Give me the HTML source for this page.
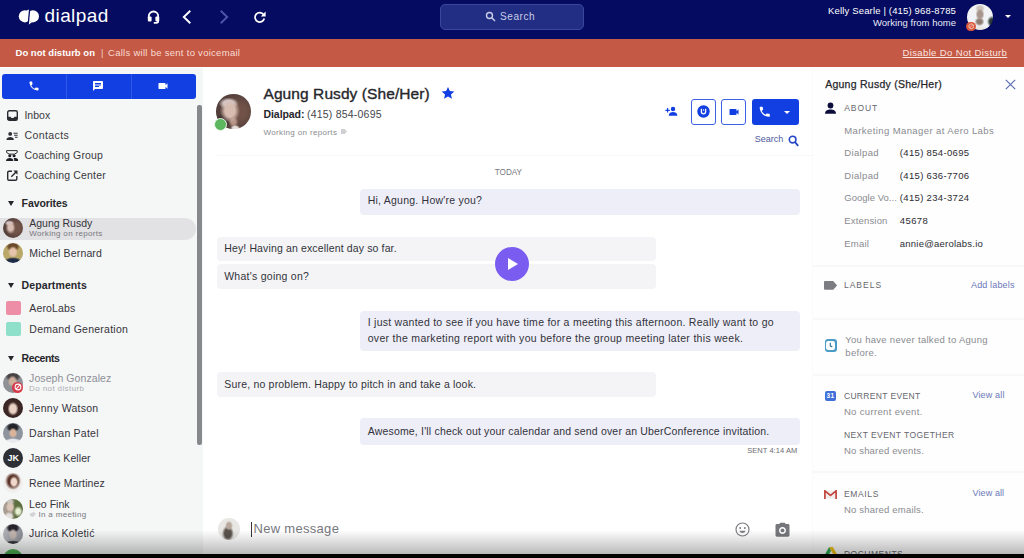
<!DOCTYPE html>
<html lang="en">
<head>
<meta charset="utf-8">
<title>Dialpad</title>
<style>
*{box-sizing:border-box;margin:0;padding:0}
html,body{width:1024px;height:558px;overflow:hidden;background:#fff;font-family:"Liberation Sans",sans-serif;color:#2a2a2e}
.abs{position:absolute}
.t{position:absolute;white-space:nowrap}
#app{position:relative;width:1024px;height:558px;overflow:hidden;background:#fff}
#top{position:absolute;left:0;top:0;width:1024px;height:39px;background:#040b60}
#searchbox{position:absolute;left:440px;top:4px;width:144px;height:26px;border-radius:5px;background:#222e84;border:1px solid #3a479c}
#dnd{position:absolute;left:0;top:38.700px;width:1024px;height:28.800px;background:#c45945}
#side{position:absolute;left:0;top:67.500px;width:203px;height:491px;background:#f5f6f6}
#tabs{position:absolute;left:2px;top:73.500px;width:194px;height:25.500px;background:#123fe2;border-radius:3px}
#tabs i{position:absolute;top:0;width:1px;height:25.500px;background:rgba(255,255,255,.13)}
#scroll{position:absolute;left:197.300px;top:105px;width:4.800px;height:340px;background:#87888c;border-radius:2px}
.tri{position:absolute;left:8px;width:0;height:0;border-left:3.5px solid transparent;border-right:3.5px solid transparent;border-top:5px solid #26262b}
.av{position:absolute;left:3px;width:20px;height:20px;border-radius:50%;overflow:hidden}
#main{position:absolute;left:203px;top:67.500px;width:609px;height:491px;background:#fff}
.bub{position:absolute;border-radius:4px}
.me{left:360px;width:440px;background:#eeeef8}
.you{left:217px;width:439px;background:#f4f4f6}
#right{position:absolute;left:812px;top:67.500px;width:212px;height:491px;background:#fefefe;border-left:1px solid #fafafb}
.sep{position:absolute;left:813px;width:211px;height:2px;background:#f8f8f9}
#fade{position:absolute;left:0;top:530px;width:1024px;height:24px;background:linear-gradient(to bottom,rgba(0,0,0,0),rgba(0,0,0,.12) 45%,rgba(0,0,0,.27))}
#bar{position:absolute;left:0;top:554px;width:1024px;height:4px;background:#000}

</style>
</head>
<body>
<div id="app">
<div id="top"></div>
<svg class="abs" style="left:18px;top:9px" width="22" height="17" viewBox="0 0 22 17"><circle cx="6.900" cy="7.300" r="6.100" fill="#fff"/><circle cx="14.900" cy="7.300" r="6.100" fill="#fff"/><path d="M11.300.300L11 5 7.500 2.200Z" fill="#fff"/><path d="M9.800 16.300L10.600 11.500 14 13.200Z" fill="#fff"/><path d="M11.700-.500L10.100 17" stroke="#040b60" stroke-width="1.300" fill="none"/></svg>
<svg class="abs" style="left:147px;top:10px" width="13" height="14" viewBox="0 0 13 14"><path d="M1.800 8V6.200a4.700 4.700 0 0 1 9.400 0V11a1.800 1.800 0 0 1-1.800 1.800H6.800" fill="none" stroke="#fff" stroke-width="1.800"/><rect x=".800" y="6.400" width="3.800" height="5.200" rx="1.100" fill="#fff"/><rect x="8.400" y="6.400" width="3.800" height="5.200" rx="1.100" fill="#fff"/></svg>
<svg class="abs" style="left:181px;top:9px" width="12" height="16" viewBox="0 0 12 16"><path d="M9.300 1.800L2.800 8L9.300 14.200" fill="none" stroke="#fff" stroke-width="1.900"/></svg>
<svg class="abs" style="left:218px;top:9px" width="12" height="16" viewBox="0 0 12 16"><path d="M2.700 1.800L9.200 8L2.700 14.200" fill="none" stroke="#4d55a6" stroke-width="1.900"/></svg>
<svg class="abs" style="left:253px;top:11px" width="14" height="13" viewBox="0 0 14 13"><path d="M10.600 3.600A4.700 4.700 0 1 0 11.300 7.500" fill="none" stroke="#fff" stroke-width="1.700"/><path d="M12.600.600V5.400H7.800Z" fill="#fff"/></svg>
<div id="searchbox"></div>
<svg class="abs" style="left:485px;top:11px" width="11" height="11" viewBox="0 0 11 11"><circle cx="4.500" cy="4.500" r="3" fill="none" stroke="#c9cde6" stroke-width="1.400"/><path d="M6.800 6.800L10 10" stroke="#c9cde6" stroke-width="1.500"/></svg>
<div class="abs" style="left:967px;top:4px;width:26px;height:26px;border-radius:50%;background:radial-gradient(ellipse 4.500px 6px at 50% 40%,#a8968c 0 55%,rgba(168,150,140,0) 100%),radial-gradient(ellipse 5px 4px at 50% 17%,#cdc6be 0 55%,rgba(205,198,190,0) 100%),radial-gradient(ellipse 5px 4.500px at 48% 68%,#8e7e74 0 50%,rgba(142,126,116,0) 100%),radial-gradient(ellipse 9px 5px at 48% 102%,#ece9e5 0 70%,rgba(236,233,229,0) 100%),radial-gradient(ellipse 5px 6px at 96% 68%,#2e3a34 0 45%,rgba(46,58,52,0) 100%),#f1f3f6"></div>
<div class="abs" style="left:966px;top:21.500px;width:9.500px;height:9.500px;border-radius:50%;background:#d9583c"></div>
<svg class="abs" style="left:967.500px;top:23px" width="6.500" height="6.500" viewBox="0 0 13 13"><circle cx="6.500" cy="6.500" r="4.800" fill="none" stroke="#f6d2c8" stroke-width="1.700"/><path d="M3.200 9.800L9.800 3.200" stroke="#f6d2c8" stroke-width="1.700"/></svg>
<div class="abs" style="left:1004.800px;top:15.300px;width:0;height:0;border-left:3px solid transparent;border-right:3px solid transparent;border-top:3.600px solid #fff"></div>

<div id="dnd"></div>

<div id="side"></div>
<div id="tabs">
  <i style="left:64px"></i><i style="left:129px"></i>
  <svg class="abs" style="left:26px;top:6.300px" width="12" height="12" viewBox="0 0 24 24"><path fill="#fff" d="M6.600 10.800c1.400 2.800 3.800 5.100 6.600 6.600l2.200-2.200c.3-.3.700-.4 1-.2 1.100.4 2.300.6 3.600.6.600 0 1 .4 1 1V20c0 .6-.4 1-1 1C10.600 21 3 13.400 3 4c0-.6.400-1 1-1h3.500c.6 0 1 .4 1 1 0 1.300.2 2.500.6 3.600.1.300 0 .7-.2 1z"/></svg>
  <svg class="abs" style="left:90px;top:6.300px" width="12" height="12" viewBox="0 0 24 24"><path fill="#fff" d="M20 2H4c-1.100 0-2 .9-2 2v18l4-4h14c1.100 0 2-.9 2-2V4c0-1.100-.9-2-2-2zM6 9h12v2H6zm8 5H6v-2h8zm4-6H6V6h12z"/></svg>
  <svg class="abs" style="left:155px;top:6.300px" width="12" height="12" viewBox="0 0 24 24"><path fill="#fff" d="M17 10.500V7c0-.600-.400-1-1-1H4c-.600 0-1 .400-1 1v10c0 .600.400 1 1 1h12c.600 0 1-.400 1-1v-3.500l4 4v-11z"/></svg>
</div>
<div id="scroll"></div>

<svg class="abs" style="left:6.500px;top:109.500px" width="11" height="11" viewBox="0 0 11 11"><rect x=".700" y=".700" width="9.600" height="9.600" rx="1.600" fill="none" stroke="#2a2a30" stroke-width="1.400"/><path d="M1 6.700h2.600c.200 .900 .900 1.400 1.900 1.400s1.700-.500 1.900-1.400H10v2.800c0 .400-.300.700-.700.700H1.700c-.400 0-.700-.300-.700-.700z" fill="#2a2a30"/></svg>
<svg class="abs" style="left:5.500px;top:130.500px" width="12.500" height="9.500" viewBox="0 0 28 23"><circle cx="9" cy="7" r="4.600" fill="#2e2e33"/><path d="M0 21c0-4.500 4.500-6.500 9-6.500s9 2 9 6.500v1H0z" fill="#2e2e33"/><path d="M17 4.500h10v2.400H17zm1.500 4.800H27v2.400h-8.500zm2 4.800H27v2.400h-6.500z" fill="#2e2e33"/></svg>
<svg class="abs" style="left:5.900px;top:149.800px" width="12.400" height="11.400" viewBox="0 0 12.400 11.400"><path d="M.600.600H11.200V2.500L8.600 4.100H3.200L.600 2.500Z" fill="none" stroke="#2a2a30" stroke-width="1"/><circle cx="3.800" cy="5.800" r="1.550" fill="#1e1e24"/><circle cx="8.100" cy="5.800" r="1.550" fill="#1e1e24"/><path d="M0 11.300C0 8.700 1.800 7.900 3.800 7.900S7.400 8.700 7.400 11.300Z" fill="#1e1e24"/><path d="M8.300 11.300C8.300 9.500 8 8.600 7.600 8.100 8 7.950 8.400 7.900 8.800 7.900 10.700 7.900 12.400 8.700 12.400 11.300Z" fill="#1e1e24"/></svg>
<svg class="abs" style="left:6.500px;top:169.500px" width="11" height="11" viewBox="0 0 11 11"><path d="M5 1.200H2A1.300 1.300 0 0 0 .700 2.500V9A1.300 1.300 0 0 0 2 10.300H8.500A1.300 1.300 0 0 0 9.800 9V6" fill="none" stroke="#2a2a30" stroke-width="1.400"/><path d="M4.300 6.700L9.600 1.400" stroke="#2a2a30" stroke-width="1.400" fill="none"/><path d="M6.300.500H10.500V4.700Z" fill="#2a2a30"/></svg>

<div class="tri" style="top:201px"></div>
<div class="abs" style="left:0;top:217.500px;width:196px;height:22px;background:#e2e2e4;border-radius:0 12px 12px 0"></div>
<div class="av" style="top:218px;background:radial-gradient(ellipse 5px 6.500px at 38% 48%,#d8bcb2 0 45%,rgba(216,188,178,0) 100%),radial-gradient(ellipse 5px 3px at 32% 26%,#d2c2c4 0 45%,rgba(210,194,196,0) 100%),radial-gradient(circle at 62% 50%,#735449 0 30%,#5a443e 60%,#463634)"></div>
<div class="av" style="top:243px;background:radial-gradient(ellipse 5px 6px at 50% 45%,#e6c4ac 0 55%,rgba(230,196,172,0) 100%),radial-gradient(ellipse 7px 5px at 50% 18%,#6a4a2c 0 60%,rgba(106,74,44,0) 100%),radial-gradient(ellipse 10px 6px at 50% 100%,#1e2c48 0 70%,rgba(30,44,72,0) 100%),#b9a868"></div>

<div class="tri" style="top:283px"></div>
<div class="abs" style="left:6px;top:301px;width:14.500px;height:14px;border-radius:2px;background:#ee8ea6"></div>
<div class="abs" style="left:6px;top:322px;width:14.500px;height:14px;border-radius:2px;background:#8fe0cb"></div>

<div class="tri" style="top:356px"></div>
<div class="av" style="top:373px;opacity:.85;background:radial-gradient(ellipse 5px 6px at 48% 42%,#c9a48e 0 55%,rgba(201,164,142,0) 100%),radial-gradient(ellipse 8px 6px at 50% 15%,#2a2426 0 60%,rgba(42,36,38,0) 100%),#7d7f86"></div>
<div class="abs" style="left:12.200px;top:381.800px;width:11px;height:11px;border-radius:50%;background:#d63a48"></div>
<svg class="abs" style="left:13.700px;top:383.300px" width="8" height="8" viewBox="0 0 13 13"><circle cx="6.500" cy="6.500" r="4.700" fill="none" stroke="#fff" stroke-width="1.700"/><path d="M3.200 9.800L9.800 3.200" stroke="#fff" stroke-width="1.700"/></svg>
<div class="av" style="top:398px;background:radial-gradient(ellipse 5.500px 7px at 50% 54%,#ecd2c6 0 58%,rgba(236,210,198,0) 100%),radial-gradient(circle at 50% 50%,#3e2826 0 50%,#261a1a)"></div>
<div class="av" style="top:423px;background:radial-gradient(ellipse 4.500px 5.500px at 50% 50%,#d8b49c 0 55%,rgba(216,180,156,0) 100%),radial-gradient(ellipse 7px 5px at 50% 22%,#23232a 0 60%,rgba(35,35,42,0) 100%),radial-gradient(ellipse 10px 5px at 50% 100%,#e8eaf0 0 70%,rgba(232,234,240,0) 100%),#8e949e"></div>
<div class="av" style="top:448px;background:#2f3036"></div>
<div class="av" style="top:473px;background:radial-gradient(ellipse 4.500px 6px at 55% 45%,#f0d8cc 0 55%,rgba(240,216,204,0) 100%),radial-gradient(ellipse 8px 9px at 50% 40%,#5a3428 0 60%,rgba(90,52,40,0) 100%),#f2f0ee"></div>
<div class="av" style="top:498.600px;background:radial-gradient(ellipse 4.500px 5.500px at 36% 40%,#dcc6b8 0 55%,rgba(220,198,184,0) 100%),radial-gradient(ellipse 4px 3px at 36% 14%,#c9c4c0 0 50%,rgba(201,196,192,0) 100%),radial-gradient(ellipse 4.500px 5.500px at 76% 62%,#e6efd2 0 45%,rgba(230,239,210,0) 100%),radial-gradient(ellipse 5px 5px at 30% 88%,#e4e0dc 0 50%,rgba(228,224,220,0) 100%),linear-gradient(90deg,#a89c90 0 42%,#5f7040 62% 100%)"></div>
<div class="av" style="top:523.700px;background:radial-gradient(ellipse 4.500px 6px at 50% 52%,#c2b6b0 0 55%,rgba(194,182,176,0) 100%),radial-gradient(ellipse 7px 5px at 50% 20%,#26242a 0 60%,rgba(38,36,42,0) 100%),radial-gradient(ellipse 10px 4px at 50% 102%,#34343c 0 70%,rgba(52,52,60,0) 100%),linear-gradient(90deg,#b4b5ba,#8c8e96)"></div>
<div class="av" style="top:549px;background:#4cae52"></div>
<svg class="abs" style="left:30px;top:511.500px" width="6" height="5" viewBox="0 0 6 5"><path d="M0 1.500L4 0 6 2 3 5 0 4Z" fill="#d4d4d8"/></svg>

<div id="main"></div>
<div class="abs" style="left:217px;top:155px;width:595px;height:1px;background:#f7f7f9"></div>
<div class="abs" style="left:216px;top:94px;width:34.500px;height:34.500px;border-radius:50%;background:radial-gradient(ellipse 10px 12px at 40% 48%,#d8bcb0 0 50%,rgba(216,188,176,0) 100%),radial-gradient(ellipse 10px 6px at 36% 27%,#d6c8ca 0 50%,rgba(214,200,202,0) 100%),radial-gradient(ellipse 5px 3px at 55% 97%,#e6deda 0 50%,rgba(230,222,218,0) 100%),radial-gradient(ellipse 5px 6px at 50% 80%,#b89488 0 40%,rgba(184,148,136,0) 100%),radial-gradient(ellipse 8px 8px at 18% 78%,#3c2e2e 0 40%,rgba(60,46,46,0) 100%),radial-gradient(circle at 65% 50%,#705248 0 25%,#5a443e 55%,#463634)"></div>
<div class="abs" style="left:213.500px;top:117.500px;width:13.500px;height:13.500px;border-radius:50%;background:#5cb75e;border:1px solid #eef6ee"></div>
<svg class="abs" style="left:441px;top:86px" width="14" height="14" viewBox="0 0 24 24"><path fill="#123fe2" d="M12 1.500l3.200 7 7.600.800-5.700 5.100 1.600 7.500L12 18l-6.700 3.900 1.600-7.500L1.200 9.300l7.600-.800z"/></svg>
<svg class="abs" style="left:340.800px;top:128.800px" width="6" height="5" viewBox="0 0 6 5"><path d="M0 0H3.600L6 2.500 3.600 5H0Z" fill="#cfcfd4"/></svg>

<svg class="abs" style="left:665px;top:106px" width="12.500" height="10" viewBox="0 0 28 22"><circle cx="18" cy="6.500" r="5" fill="#123fe2"/><path d="M8.500 20c0-5 5-7 9.500-7s9.500 2 9.500 7v1.500h-19z" fill="#123fe2"/><path d="M4.500 4.500v3.700H.8v2.600h3.700v3.700h2.600v-3.700h3.700V8.200H7.100V4.500z" fill="#123fe2"/></svg>
<div class="abs" style="left:690.500px;top:99px;width:25px;height:25.500px;border:1px solid #3a62e2;border-radius:3px"></div>
<svg class="abs" style="left:696.500px;top:105px" width="13" height="13" viewBox="0 0 13 13"><circle cx="6.500" cy="6.500" r="6.200" fill="#123fe2"/><path d="M4.400 3.800v3a2.100 2.100 0 0 0 4.200 0v-3" fill="none" stroke="#fff" stroke-width="1.300"/><circle cx="6.500" cy="5" r=".7" fill="#fff"/></svg>
<div class="abs" style="left:721px;top:99px;width:25px;height:25.500px;border:1px solid #3a62e2;border-radius:3px"></div>
<svg class="abs" style="left:727.500px;top:105.500px" width="12" height="12" viewBox="0 0 24 24"><path fill="#123fe2" d="M17 10.500V7c0-.600-.400-1-1-1H4c-.600 0-1 .400-1 1v10c0 .600.400 1 1 1h12c.600 0 1-.400 1-1v-3.500l4 4v-11z"/></svg>
<div class="abs" style="left:751.500px;top:99px;width:47.600px;height:25.500px;background:#123fe2;border-radius:3px"></div>
<svg class="abs" style="left:757.500px;top:105px" width="13.500" height="13.500" viewBox="0 0 24 24"><path fill="#fff" d="M6.600 10.800c1.400 2.800 3.800 5.100 6.600 6.600l2.200-2.200c.3-.3.700-.4 1-.2 1.100.4 2.300.6 3.600.6.600 0 1 .4 1 1V20c0 .6-.4 1-1 1C10.600 21 3 13.400 3 4c0-.6.400-1 1-1h3.500c.6 0 1 .4 1 1 0 1.300.2 2.500.6 3.600.1.300 0 .7-.2 1z"/></svg>
<div class="abs" style="left:784px;top:110.500px;width:0;height:0;border-left:3px solid transparent;border-right:3px solid transparent;border-top:3.500px solid #fff"></div>
<svg class="abs" style="left:787.500px;top:135px" width="11" height="12" viewBox="0 0 11 12"><circle cx="4.600" cy="4.600" r="3.300" fill="none" stroke="#2546c4" stroke-width="1.600"/><path d="M7 7.200L10.200 10.800" stroke="#2546c4" stroke-width="1.800"/></svg>

<div class="bub me" style="top:189.200px;height:25.800px"></div>
<div class="bub you" style="top:236.600px;height:24.300px"></div>
<div class="bub you" style="top:264px;height:24.500px"></div>
<div class="bub me" style="top:310.500px;height:40px"></div>
<div class="bub you" style="top:372px;height:25px"></div>
<div class="bub me" style="top:418px;height:26.800px"></div>

<div class="abs" style="left:495px;top:247px;width:34px;height:34px;border-radius:50%;background:#7a5cf0"></div>
<div class="abs" style="left:507.500px;top:257.500px;width:0;height:0;border-top:6.500px solid transparent;border-bottom:6.500px solid transparent;border-left:10.500px solid #fff"></div>

<div class="abs" style="left:218px;top:518px;width:22px;height:22px;border-radius:50%;background:radial-gradient(ellipse 4px 5px at 50% 35%,#b8a89c 0 55%,rgba(184,168,156,0) 100%),radial-gradient(ellipse 6px 8px at 45% 70%,#5a524c 0 55%,rgba(90,82,76,0) 100%),#e9e7e4"></div>
<div class="abs" style="left:251px;top:521.500px;width:1px;height:15px;background:#34343a"></div>
<svg class="abs" style="left:735.300px;top:521.900px" width="15" height="15" viewBox="0 0 15 15"><circle cx="7.500" cy="7.500" r="6.500" fill="none" stroke="#7c7d82" stroke-width="1.200"/><circle cx="5.200" cy="6" r="1" fill="#7c7d82"/><circle cx="9.800" cy="6" r="1" fill="#7c7d82"/><path d="M4.300 8.800a3.400 3.400 0 0 0 6.400 0z" fill="#7c7d82"/></svg>
<svg class="abs" style="left:772.800px;top:521.700px" width="19" height="15.400" viewBox="0 0 24 22"><path fill="#76777c" d="M9 1L7.200 3H4c-1.100 0-2 .900-2 2v14c0 1.100.900 2 2 2h16c1.100 0 2-.900 2-2V5c0-1.100-.900-2-2-2h-3.200L15 1zm3 16c-2.800 0-5-2.200-5-5s2.200-5 5-5 5 2.200 5 5-2.200 5-5 5z"/><circle cx="12" cy="12" r="2.800" fill="#76777c"/></svg>

<div id="right"></div>
<svg class="abs" style="left:1004.500px;top:79px" width="11" height="11" viewBox="0 0 11 11"><path d="M.8.800l9.400 9.400M10.200.800L.8 10.200" stroke="#5a6cb4" stroke-width="1.200" fill="none"/></svg>
<svg class="abs" style="left:825px;top:101.500px" width="11" height="12" viewBox="0 0 22 24"><circle cx="11" cy="7" r="5.800" fill="#0d0d3c"/><path d="M0 23.500c0-6 5-8.500 11-8.500s11 2.500 11 8.500z" fill="#0d0d3c"/></svg>
<div class="sep" style="top:265px"></div>
<svg class="abs" style="left:824px;top:281.200px" width="13.600" height="8.800" viewBox="0 0 14 9"><path d="M1 0h8.500L13.500 4.500 9.500 9H1a1 1 0 0 1-1-1V1a1 1 0 0 1 1-1z" fill="#7c7d82"/></svg>
<div class="sep" style="top:318px"></div>
<div class="abs" style="left:824.500px;top:339px;width:12.500px;height:12.500px;border-radius:3px;background:#4a9cc6"></div>
<svg class="abs" style="left:826.300px;top:340.800px" width="9" height="9" viewBox="0 0 9 9"><rect width="9" height="9" rx="2.200" fill="#fff"/><path d="M4.300 1.800v3l2 1.100" stroke="#2d6e92" stroke-width="1.100" fill="none"/></svg>
<div class="sep" style="top:374px"></div>
<div class="abs" style="left:825px;top:390.500px;width:11px;height:10.500px;border-radius:2px;background:#3f6fd8"></div>
<div class="sep" style="top:471px"></div>
<svg class="abs" style="left:824px;top:490px" width="13" height="9" viewBox="0 0 13 9"><rect x=".500" y=".300" width="12" height="8.400" fill="#f1eeee"/><path d="M.900 9V.900L6.500 5.300 12.100.900V9" fill="none" stroke="#c2463c" stroke-width="1.700"/></svg>
<svg class="abs" style="left:825px;top:547px" width="12" height="11" viewBox="0 0 13 12"><path d="M4.500 0h4L13 8H9z" fill="#f4c20d"/><path d="M4.500 0L0 8l2 4 4.500-8z" fill="#2da94f"/><path d="M2 12h9l2-4H4.200z" fill="#3b7ded"/></svg>

<div class="t" style="left:44.5px;top:4.0px;font-size:19px;line-height:23px;color:#fff;letter-spacing:0.42px;">dialpad</div>
<div class="t" style="left:500px;top:10.5px;font-size:10px;line-height:12px;color:#c9cde6;letter-spacing:0.60px;">Search</div>
<div class="t" style="left:828px;top:4.5px;font-size:9.5px;line-height:12px;color:#fff;letter-spacing:0.16px;">Kelly Searle | (415) 968-8785</div>
<div class="t" style="left:873px;top:16.5px;font-size:9.5px;line-height:12px;color:#e8eaf6;letter-spacing:0.02px;">Working from home</div>
<div class="t" style="left:15.5px;top:46.5px;font-size:9.5px;line-height:12px;color:#fff;font-weight:700;letter-spacing:0.02px;">Do not disturb on</div>
<div class="t" style="left:101px;top:46.5px;font-size:9.5px;line-height:12px;color:#f3cfc5;">|</div>
<div class="t" style="left:108px;top:46.5px;font-size:9.5px;line-height:12px;color:#f8dcd4;letter-spacing:0.28px;">Calls will be sent to voicemail</div>
<div class="t" style="left:902.5px;top:46.5px;font-size:9.5px;line-height:12px;color:#fbe6e0;letter-spacing:0.37px;text-decoration:underline;text-decoration-thickness:.8px;text-underline-offset:1px;">Disable Do Not Disturb</div>
<div class="t" style="left:24.4px;top:108.5px;font-size:10.5px;line-height:13px;color:#3a3a40;letter-spacing:0.03px;">Inbox</div>
<div class="t" style="left:24.4px;top:128.5px;font-size:10.5px;line-height:13px;color:#3a3a40;letter-spacing:0.42px;">Contacts</div>
<div class="t" style="left:24.4px;top:148.5px;font-size:10.5px;line-height:13px;color:#3a3a40;letter-spacing:0.16px;">Coaching Group</div>
<div class="t" style="left:24.4px;top:168.5px;font-size:10.5px;line-height:13px;color:#3a3a40;letter-spacing:0.18px;">Coaching Center</div>
<div class="t" style="left:21.6px;top:196.5px;font-size:10.5px;line-height:13px;color:#26262b;font-weight:700;letter-spacing:-0.10px;">Favorites</div>
<div class="t" style="left:29.3px;top:216.5px;font-size:10.5px;line-height:13px;color:#34343a;letter-spacing:-0.01px;">Agung Rusdy</div>
<div class="t" style="left:29.3px;top:228.5px;font-size:8px;line-height:10px;color:#77787e;letter-spacing:0.33px;">Working on reports</div>
<div class="t" style="left:29.3px;top:246.5px;font-size:10.5px;line-height:13px;color:#34343a;letter-spacing:0.15px;">Michel Bernard</div>
<div class="t" style="left:21.6px;top:278.5px;font-size:10.5px;line-height:13px;color:#26262b;font-weight:700;letter-spacing:0.10px;">Departments</div>
<div class="t" style="left:29.3px;top:301.5px;font-size:10.5px;line-height:13px;color:#34343a;letter-spacing:0.13px;">AeroLabs</div>
<div class="t" style="left:29.3px;top:322.5px;font-size:10.5px;line-height:13px;color:#34343a;letter-spacing:0.25px;">Demand Generation</div>
<div class="t" style="left:21.6px;top:351.5px;font-size:10.5px;line-height:13px;color:#26262b;font-weight:700;letter-spacing:-0.42px;">Recents</div>
<div class="t" style="left:29.1px;top:371.5px;font-size:10.5px;line-height:13px;color:#8e8f95;letter-spacing:0.07px;">Joseph Gonzalez</div>
<div class="t" style="left:29.1px;top:383.5px;font-size:8px;line-height:10px;color:#aeafb4;letter-spacing:0.39px;">Do not disturb</div>
<div class="t" style="left:29.1px;top:401.5px;font-size:10.5px;line-height:13px;color:#34343a;letter-spacing:0.27px;">Jenny Watson</div>
<div class="t" style="left:29.1px;top:426.5px;font-size:10.5px;line-height:13px;color:#34343a;letter-spacing:0.24px;">Darshan Patel</div>
<div class="t" style="left:29.1px;top:451.5px;font-size:10.5px;line-height:13px;color:#34343a;letter-spacing:0.07px;">James Keller</div>
<div class="t" style="left:29.1px;top:476.5px;font-size:10.5px;line-height:13px;color:#34343a;letter-spacing:0.12px;">Renee Martinez</div>
<div class="t" style="left:29.1px;top:497.5px;font-size:10.5px;line-height:13px;color:#34343a;letter-spacing:0.03px;">Leo Fink</div>
<div class="t" style="left:38.4px;top:509.5px;font-size:8px;line-height:10px;color:#77787e;letter-spacing:0.34px;">In a meeting</div>
<div class="t" style="left:29.1px;top:526.5px;font-size:10.5px;line-height:13px;color:#34343a;letter-spacing:0.22px;">Jurica Koletić</div>
<div class="t" style="left:263.5px;top:84.0px;font-size:15.5px;line-height:19px;color:#26262b;letter-spacing:0.08px;-webkit-text-stroke:.35px #26262b;">Agung Rusdy (She/Her)</div>
<div class="t" style="left:263.5px;top:107.7px;font-size:10.5px;line-height:13px;color:#26262b;font-weight:700;letter-spacing:-0.07px;">Dialpad:</div>
<div class="t" style="left:307px;top:107.7px;font-size:10.5px;line-height:13px;color:#45464c;letter-spacing:0.21px;">(415) 854-0695</div>
<div class="t" style="left:263.5px;top:127.5px;font-size:8px;line-height:10px;color:#8a8b91;letter-spacing:0.35px;">Working on reports</div>
<div class="t" style="left:754.7px;top:134.1px;font-size:9px;line-height:11px;color:#4d5a9e;letter-spacing:-0.01px;">Search</div>
<div class="t" style="left:494.8px;top:168.2px;font-size:8.2px;line-height:10px;color:#77787e;letter-spacing:-0.06px;">TODAY</div>
<div class="t" style="left:367.7px;top:194.2px;font-size:10.5px;line-height:13px;color:#32333a;letter-spacing:0.23px;">Hi, Agung. How're you?</div>
<div class="t" style="left:224.2px;top:241.5px;font-size:10.5px;line-height:13px;color:#32333a;letter-spacing:0.14px;">Hey! Having an excellent day so far.</div>
<div class="t" style="left:224.2px;top:269.5px;font-size:10.5px;line-height:13px;color:#32333a;letter-spacing:0.26px;">What's going on?</div>
<div class="t" style="left:367.7px;top:316.0px;font-size:10.5px;line-height:13px;color:#32333a;letter-spacing:0.26px;">I just wanted to see if you have time for a meeting this afternoon. Really want to go</div>
<div class="t" style="left:367.7px;top:331.5px;font-size:10.5px;line-height:13px;color:#32333a;letter-spacing:0.31px;">over the marketing report with you before the group meeting later this week.</div>
<div class="t" style="left:224.2px;top:377.5px;font-size:10.5px;line-height:13px;color:#32333a;letter-spacing:0.20px;">Sure, no problem. Happy to pitch in and take a look.</div>
<div class="t" style="left:367.7px;top:424.5px;font-size:10.5px;line-height:13px;color:#32333a;letter-spacing:0.18px;">Awesome, I'll check out your calendar and send over an UberConference invitation.</div>
<div class="t" style="left:747.2px;top:445.7px;font-size:7.5px;line-height:9px;color:#6a6b71;letter-spacing:0.05px;">SENT 4:14 AM</div>
<div class="t" style="left:253.5px;top:520.7px;font-size:13px;line-height:16px;color:#77787e;letter-spacing:0.30px;">New message</div>
<div class="t" style="left:825.2px;top:77.5px;font-size:10.5px;line-height:13px;color:#26262b;letter-spacing:0.25px;-webkit-text-stroke:.25px #26262b;">Agung Rusdy (She/Her)</div>
<div class="t" style="left:844.3px;top:102.8px;font-size:8.5px;line-height:11px;color:#66676d;letter-spacing:0.89px;">ABOUT</div>
<div class="t" style="left:844.3px;top:124.5px;font-size:9.5px;line-height:12px;color:#8a8b91;letter-spacing:0.40px;">Marketing Manager at Aero Labs</div>
<div class="t" style="left:844.3px;top:147.0px;font-size:9.5px;line-height:12px;color:#8a8b91;letter-spacing:0.35px;">Dialpad</div>
<div class="t" style="left:899.8px;top:147.0px;font-size:9.5px;line-height:12px;color:#2c2c33;letter-spacing:0.33px;">(415) 854-0695</div>
<div class="t" style="left:844.3px;top:169.5px;font-size:9.5px;line-height:12px;color:#8a8b91;letter-spacing:0.35px;">Dialpad</div>
<div class="t" style="left:899.8px;top:169.5px;font-size:9.5px;line-height:12px;color:#2c2c33;letter-spacing:0.33px;">(415) 636-7706</div>
<div class="t" style="left:844.3px;top:192.0px;font-size:9.5px;line-height:12px;color:#8a8b91;letter-spacing:0.02px;">Google Vo...</div>
<div class="t" style="left:899.8px;top:192.0px;font-size:9.5px;line-height:12px;color:#2c2c33;letter-spacing:0.33px;">(415) 234-3724</div>
<div class="t" style="left:844.3px;top:215.0px;font-size:9.5px;line-height:12px;color:#8a8b91;letter-spacing:0.17px;">Extension</div>
<div class="t" style="left:899.8px;top:215.0px;font-size:9.5px;line-height:12px;color:#2c2c33;letter-spacing:0.40px;">45678</div>
<div class="t" style="left:844.3px;top:237.5px;font-size:9.5px;line-height:12px;color:#8a8b91;letter-spacing:0.21px;">Email</div>
<div class="t" style="left:899.8px;top:237.5px;font-size:9.5px;line-height:12px;color:#2c2c33;letter-spacing:0.23px;">annie@aerolabs.io</div>
<div class="t" style="left:843.9px;top:280.0px;font-size:8.5px;line-height:11px;color:#66676d;letter-spacing:1.03px;">LABELS</div>
<div class="t" style="left:971px;top:279.5px;font-size:9px;line-height:11px;color:#6a78b8;letter-spacing:0.15px;">Add labels</div>
<div class="t" style="left:845.3px;top:333.5px;font-size:9.5px;line-height:12px;color:#8a8b91;letter-spacing:0.29px;">You have never talked to Agung</div>
<div class="t" style="left:845.3px;top:346.5px;font-size:9.5px;line-height:12px;color:#8a8b91;letter-spacing:0.31px;">before.</div>
<div class="t" style="left:843.9px;top:390.5px;font-size:8.5px;line-height:11px;color:#66676d;letter-spacing:0.35px;">CURRENT EVENT</div>
<div class="t" style="left:972.4px;top:389.5px;font-size:9px;line-height:11px;color:#6a78b8;letter-spacing:0.17px;">View all</div>
<div class="t" style="left:843.9px;top:405.5px;font-size:9.5px;line-height:12px;color:#8a8b91;letter-spacing:0.35px;">No current event.</div>
<div class="t" style="left:843.9px;top:429.5px;font-size:8.5px;line-height:11px;color:#66676d;letter-spacing:0.44px;">NEXT EVENT TOGETHER</div>
<div class="t" style="left:843.9px;top:444.5px;font-size:9.5px;line-height:12px;color:#8a8b91;letter-spacing:0.18px;">No shared events.</div>
<div class="t" style="left:843.9px;top:489.0px;font-size:8.5px;line-height:11px;color:#66676d;letter-spacing:0.66px;">EMAILS</div>
<div class="t" style="left:972.5px;top:487.5px;font-size:9px;line-height:11px;color:#6a78b8;letter-spacing:0.11px;">View all</div>
<div class="t" style="left:843.9px;top:504.0px;font-size:9.5px;line-height:12px;color:#8a8b91;letter-spacing:0.20px;">No shared emails.</div>
<div class="t" style="left:843.9px;top:549.0px;font-size:8.5px;line-height:11px;color:#66676d;letter-spacing:0.51px;">DOCUMENTS</div>
<div class="t" style="left:7.6px;top:452.8px;font-size:9px;line-height:11px;color:#fff;font-weight:700;letter-spacing:-0.08px;">JK</div>
<div class="t" style="left:826.5px;top:391.7px;font-size:6.5px;line-height:8px;color:#fff;font-weight:700;letter-spacing:0.51px;">31</div>
<div id="fade"></div>
<div id="bar"></div>
</div>
</body>
</html>
